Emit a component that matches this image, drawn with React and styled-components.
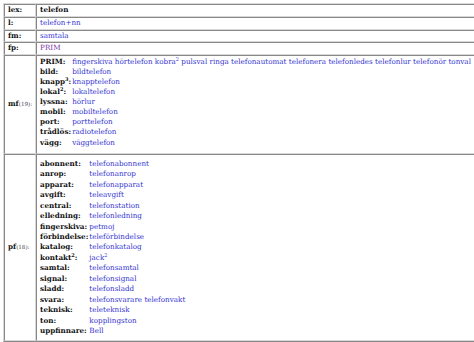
import React from "react";
import styled, { createGlobalStyle } from "styled-components";

const Global = createGlobalStyle`
  html, body { margin: 0; padding: 0; background: #fff; }
  body { padding: 3px 3px 3px 3px; font-family: "DejaVu Serif", serif; font-size: 7.2px; color: #111; }
`;

const Main = styled.table`
  width: 100%;
  border-collapse: separate;
  border-spacing: 0;
  border: 1px solid;
  border-color: #d8d8d8 #888 #888 #d8d8d8;
`;

const Cell = styled.td`
  border: 1px solid;
  border-color: #888 #d8d8d8 #d8d8d8 #888;
  padding: ${(p) => (p.$pad ? p.$pad : "0 3px")};
  height: ${(p) => p.$h || "auto"};
  line-height: 10.4px;
  vertical-align: ${(p) => (p.$mid ? "middle" : "top")};
  width: ${(p) => p.$w || "auto"};
  white-space: nowrap;
`;

const Key = styled.b`
  font-weight: bold;
`;

const Count = styled.span`
  font-size: 5.6px;
  color: #444;
`;

const A = styled.span`
  color: ${(p) => (p.$visited ? "#7a3aa8" : "#3232d2")};
`;

const Inner = styled.table`
  border-collapse: collapse;
  border-spacing: 0;
`;

const IK = styled.td`
  font-weight: bold;
  padding: 0 ${(p) => p.$gap || "4px"} 0 0;
  line-height: ${(p) => p.$lh};
  vertical-align: top;
  white-space: nowrap;
`;

const IV = styled.td`
  padding: 0;
  line-height: ${(p) => p.$lh};
  vertical-align: top;
  white-space: nowrap;
`;

const Sup = styled.sup`
  font-size: 5px;
  line-height: 0;
  vertical-align: 3px;
`;

const mf = [
  ["PRIM", null, "fingerskiva hörtelefon kobra|2 pulsval ringa telefonautomat telefonera telefonledes telefonlur telefonör tonval"],
  ["bild", null, "bildtelefon"],
  ["knapp", "3", "knapptelefon"],
  ["lokal", "2", "lokaltelefon"],
  ["lyssna", null, "hörlur"],
  ["mobil", null, "mobiltelefon"],
  ["port", null, "porttelefon"],
  ["trådlös", null, "radiotelefon"],
  ["vägg", null, "väggtelefon"],
];

const pf = [
  ["abonnent", null, "telefonabonnent"],
  ["anrop", null, "telefonanrop"],
  ["apparat", null, "telefonapparat"],
  ["avgift", null, "teleavgift"],
  ["central", null, "telefonstation"],
  ["elledning", null, "telefonledning"],
  ["fingerskiva", null, "petmoj"],
  ["förbindelse", null, "teleförbindelse"],
  ["katalog", null, "telefonkatalog"],
  ["kontakt", "2", "jack|2"],
  ["samtal", null, "telefonsamtal"],
  ["signal", null, "telefonsignal"],
  ["sladd", null, "telefonsladd"],
  ["svara", null, "telefonsvarare telefonvakt"],
  ["teknisk", null, "teleteknisk"],
  ["ton", null, "kopplingston"],
  ["uppfinnare", null, "Bell"],
];

function Value({ text }) {
  const words = text.split(" ");
  return (
    <>
      {words.map((w, i) => {
        const [word, sup] = w.split("|");
        return (
          <React.Fragment key={i}>
            {i > 0 ? " " : ""}
            <A>
              {word}
              {sup && <Sup>{sup}</Sup>}
            </A>
          </React.Fragment>
        );
      })}
    </>
  );
}

function Group({ rows, gap, lh }) {
  return (
    <Inner>
      <tbody>
        {rows.map(([k, s, v]) => (
          <tr key={k}>
            <IK $gap={gap} $lh={lh}>
              {k}
              {s && <Sup>{s}</Sup>}:
            </IK>
            <IV $lh={lh}>
              <Value text={v} />
            </IV>
          </tr>
        ))}
      </tbody>
    </Inner>
  );
}

export default function App() {
  return (
    <>
      <Global />
      <Main>
        <tbody>
          <tr>
            <Cell $w="24px" $h="11px"><Key>lex:</Key></Cell>
            <Cell $h="11px"><Key>telefon</Key></Cell>
          </tr>
          <tr>
            <Cell $h="11px"><Key>l:</Key></Cell>
            <Cell $h="11px"><A>telefon+nn</A></Cell>
          </tr>
          <tr>
            <Cell $h="10px"><Key>fm:</Key></Cell>
            <Cell $h="10px"><A>samtala</A></Cell>
          </tr>
          <tr>
            <Cell $h="10px"><Key>fp:</Key></Cell>
            <Cell $h="10px"><A $visited>PRIM</A></Cell>
          </tr>
          <tr>
            <Cell $mid $h="96px">
              <Key>mf</Key><Count>(19):</Count>
            </Cell>
            <Cell $pad="1px 3px 0 3px" $h="96px">
              <Group rows={mf} gap="1px" lh="10.1px" />
            </Cell>
          </tr>
          <tr>
            <Cell $mid>
              <Key>pf</Key><Count>(18):</Count>
            </Cell>
            <Cell $pad="4px 3px 3px 3px">
              <Group rows={pf} gap="1px" lh="10.45px" />
            </Cell>
          </tr>
        </tbody>
      </Main>
    </>
  );
}
